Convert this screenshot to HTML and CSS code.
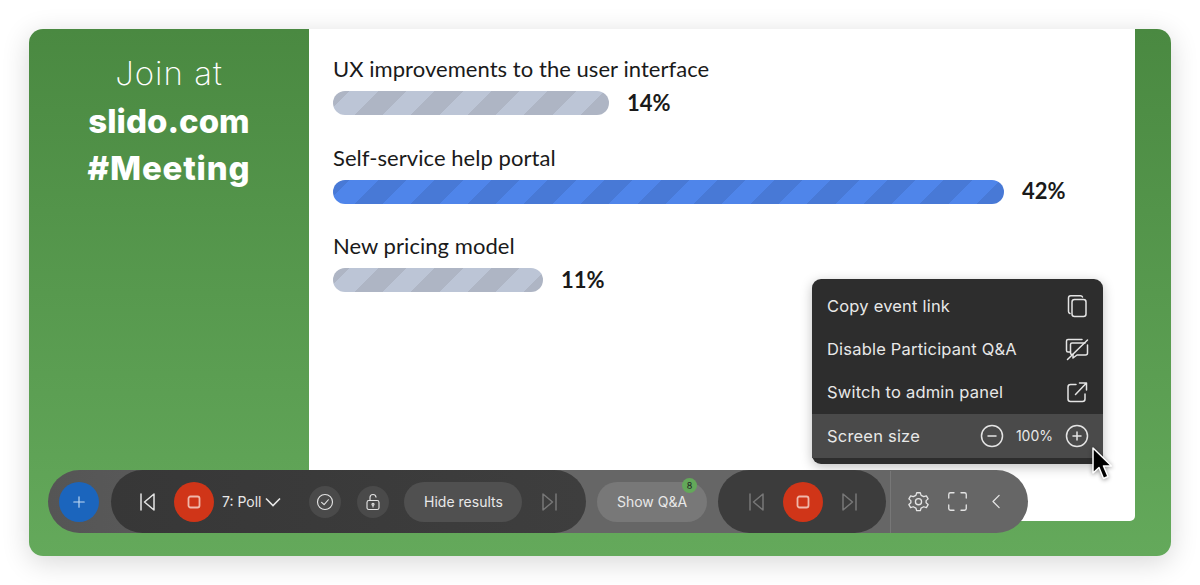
FILE: index.html
```html
<!DOCTYPE html>

<html>
    <head>
        <link rel="stylesheet" href="styles.css">
    </head>

    <body>
        <div class="card">
            <div class="join">
                <div class="join-light">Join at</div>
                <div>slido.com</div>
                <div class="join-tag">#Meeting</div>
            </div>

            <div class="slide">
                <div class="question">UX improvements to the user interface</div>
                <div class="result">
                    <div class="bar grey w14"></div>
                    <div class="percent">14%</div>
                </div>

                <div class="question">Self-service help portal</div>
                <div class="result">
                    <div class="bar blue w42"></div>
                    <div class="percent">42%</div>
                </div>

                <div class="question">New pricing model</div>
                <div class="result">
                    <div class="bar grey w11"></div>
                    <div class="percent">11%</div>
                </div>
            </div>

            <div class="menu">
                <div class="menu-row">
                    <span>Copy event link</span>
                    <svg class="icon" viewBox="0 0 24 24"><rect x="7" y="5.5" width="14" height="17" rx="2.5"/><path d="M5 19.5 Q3.5 19 3.5 17.5 V4 Q3.5 1.8 5.7 1.8 H15.5 Q17 1.8 17.5 3"/></svg>
                </div>
                <div class="menu-row">
                    <span>Disable Participant Q&amp;A</span>
                    <svg class="icon" viewBox="0 0 24 24"><path d="M5.5 15 H3 Q1.5 15 1.5 13.5 V4 Q1.5 2.5 3 2.5 H17"/><path d="M8 17.5 H7 Q5.5 17.5 5.5 16 V7.5 Q5.5 6 7 6 H20"/><path d="M22.5 8 V16 Q22.5 18 20.5 18 H12 L8 21 V18.5"/><path d="M2.5 22.5 L22.5 3"/></svg>
                </div>
                <div class="menu-row">
                    <span>Switch to admin panel</span>
                    <svg class="icon" viewBox="0 0 24 24"><path d="M11 4.5 H5.5 Q3 4.5 3 7 V19 Q3 21.5 5.5 21.5 H17.5 Q20 21.5 20 19 V14"/><path d="M10.5 14.5 L21 3.5 M14.5 3 H21.5 V10"/></svg>
                </div>
                <div class="menu-row hover">
                    <span>Screen size</span>
                    <div class="zoom">
                        <svg class="icon" viewBox="0 0 24 24"><circle cx="12" cy="12" r="10.5"/><path d="M8 12 H16"/></svg>
                        <span class="zoom-value">100%</span>
                        <svg class="icon" viewBox="0 0 24 24"><circle cx="12" cy="12" r="10.5"/><path d="M8 12 H16 M12 8 V16"/></svg>
                    </div>
                </div>
            </div>

            <div class="toolbar">
                <button class="round add">
                    <svg class="icon" viewBox="0 0 24 24"><path d="M12 5 V19 M5 12 H19"/></svg>
                </button>

                <div class="group main">
                    <svg class="icon step" viewBox="0 0 24 24"><path d="M6 4 V20 M19 4 V20 L9.5 12 Z"/></svg>
                    <button class="round stop">
                        <svg class="icon" viewBox="0 0 24 24"><rect x="6.5" y="6.5" width="11" height="11" rx="2"/></svg>
                    </button>
                    <span class="poll">7: Poll</span>
                    <svg class="chevron" viewBox="0 0 16 10"><path d="M1 1.5 L8 8.5 L15 1.5"/></svg>
                    <button class="small check">
                        <svg class="icon" viewBox="0 0 24 24"><circle cx="12" cy="12" r="10"/><path d="M7.5 12.5 L10.8 15.5 L16.5 9"/></svg>
                    </button>
                    <button class="small lock">
                        <svg class="icon" viewBox="0 0 24 24"><rect x="4" y="10" width="16" height="12" rx="2.5"/><path d="M8 10 V6 Q8 2 12 2 Q15.5 2 16 5.5"/><circle cx="12" cy="15" r="1.4"/><path d="M12 16 V18.5"/></svg>
                    </button>
                    <button class="pill hide">Hide results</button>
                    <svg class="icon step dim next" viewBox="0 0 24 24"><path d="M18 4 V20 M5 4 V20 L14.5 12 Z"/></svg>
                </div>

                <button class="pill show">
                    Show Q&amp;A
                    <span class="badge">8</span>
                </button>

                <div class="group second">
                    <svg class="icon step dim" viewBox="0 0 24 24"><path d="M6 4 V20 M19 4 V20 L9.5 12 Z"/></svg>
                    <button class="round stop">
                        <svg class="icon" viewBox="0 0 24 24"><rect x="6.5" y="6.5" width="11" height="11" rx="2"/></svg>
                    </button>
                    <svg class="icon step dim" viewBox="0 0 24 24"><path d="M18 4 V20 M5 4 V20 L14.5 12 Z"/></svg>
                </div>

                <div class="tools">
                    <svg class="icon tool" viewBox="0 0 24 24"><path d="M10 2 H14 L15 5 L18 6.5 L21 5.5 L23 9 L20.7 11 V13.5 L23 15.5 L21 19 L18 18 L15 19.5 L14 22.5 H10 L9 19.5 L6 18 L3 19 L1 15.5 L3.3 13.5 V11 L1 9 L3 5.5 L6 6.5 L9 5 Z" stroke-linejoin="round"/><circle cx="12" cy="12.2" r="3.5"/></svg>
                    <svg class="icon tool" viewBox="0 0 24 24"><path d="M2 8 V4 Q2 2 4 2 H8 M16 2 H20 Q22 2 22 4 V8 M22 16 V20 Q22 22 20 22 H16 M8 22 H4 Q2 22 2 20 V16"/></svg>
                    <svg class="icon tool" viewBox="0 0 24 24"><path d="M15 5 L8 12 L15 19"/></svg>
                </div>
            </div>

            <svg class="cursor" viewBox="0 0 22 34"><path d="M2 1 V26 L8 20.5 L12.5 31.5 L17 29.5 L12.5 19 H20.5 Z"/></svg>
        </div>
    </body>
</html>
```

FILE: styles.css
```css
*
{
    box-sizing: border-box;
}

body
{
    margin: 0;
    background: white;
    font-family: "Inter", "Liberation Sans", sans-serif;
    overflow: hidden;
}

.card
{
    position: relative;
    display: flex;
    width: 1142px;
    height: 527px;
    margin: 29px;
    border-radius: 14px;
    background: linear-gradient(#4a8941, #64a95b);
    box-shadow: 0 6px 28px rgba(0, 0, 0, 0.16);
}

.join
{
    width: 280px;
    padding-top: 21px;
    text-align: center;
    color: white;
    font-family: "Inter", "Liberation Sans", sans-serif;
    font-size: 33px;
    font-weight: 800;
    line-height: 47.5px;
}

.join-light
{
    font-weight: 200;
    letter-spacing: 1px;
}

.join-tag
{
    letter-spacing: 0.8px;
}

.slide
{
    width: 826px;
    height: 492px;
    padding: 24px 24px;
    background: white;
    border-bottom-right-radius: 5px;
    font-family: "Lato", "Liberation Sans", sans-serif;
    color: #1a1a1a;
}

.question
{
    font-size: 22px;
    line-height: 32px;
    letter-spacing: 0.05px;
}

.result
{
    display: flex;
    align-items: center;
    gap: 18px;
    height: 24px;
    margin-top: 6px;
    margin-bottom: 26.5px;
}

.bar
{
    height: 24px;
    border-radius: 12px;
}

.grey
{
    background: repeating-linear-gradient(135deg, #aeb5c4 0 12px, #bcc5d6 12px 32px, #aeb5c4 32px 40px);
}

.blue
{
    background: repeating-linear-gradient(135deg, #4879d6 0 12px, #4f85ea 12px 32px, #4879d6 32px 40px);
}

.w14
{
    width: 276px;
}

.w42
{
    width: 671px;
}

.w11
{
    width: 210px;
}

.percent
{
    margin-bottom: 2px;
    font-size: 22px;
    font-weight: 700;
}

.icon
{
    display: block;
    width: 24px;
    height: 24px;
    fill: none;
    stroke: #e4e4e4;
    stroke-width: 1.5;
    stroke-linecap: round;
    stroke-linejoin: round;
}

.menu
{
    position: absolute;
    left: 783px;
    top: 250px;
    width: 291px;
    padding: 5px 0 6px;
    border-radius: 9px;
    background: #2d2d2d;
    color: #e8e8e8;
    font-size: 16.5px;
    letter-spacing: 0.2px;
    box-shadow: 0 3px 12px rgba(0, 0, 0, 0.25);
}

.menu-row
{
    display: flex;
    justify-content: space-between;
    align-items: center;
    height: 43.4px;
    padding: 0 14px 0 15px;
}

.hover
{
    background: #4a4a4a;
}

.zoom
{
    display: flex;
    align-items: center;
    gap: 12px;
}

.zoom-value
{
    font-size: 14px;
    letter-spacing: 0;
}

.toolbar
{
    position: absolute;
    left: 19px;
    top: 441px;
    display: flex;
    align-items: center;
    width: 980px;
    height: 63px;
    padding-left: 11px;
    border-radius: 32px;
    background: linear-gradient(to right, #555555, #666666 45%);
    font-size: 14px;
    color: #e8e8e8;
}

button
{
    display: flex;
    justify-content: center;
    align-items: center;
    border: none;
    padding: 0;
    font: inherit;
    color: inherit;
}

.round
{
    flex: none;
    width: 40px;
    height: 40px;
    border-radius: 50%;
}

.add
{
    background: #1b65bd;
}

.add .icon
{
    width: 18px;
    height: 18px;
    stroke: #c4dcf5;
}

.stop
{
    background: #d03518;
}

.stop .icon
{
    stroke: #f0b8aa;
    stroke-width: 1.8;
}

.group
{
    display: flex;
    align-items: center;
    height: 63px;
    border-radius: 32px;
}

.main
{
    width: 475px;
    margin-left: 12px;
    padding-left: 24px;
    background: linear-gradient(to right, #373737, #3e3e3e);
}

.step
{
    flex: none;
    margin-right: 15px;
}

.dim
{
    stroke: #777777;
}

.poll
{
    margin-left: 8px;
    white-space: nowrap;
}

.chevron
{
    flex: none;
    width: 16px;
    height: 10px;
    margin-left: 4px;
    fill: none;
    stroke: #e8e8e8;
    stroke-width: 1.6;
}

.small
{
    flex: none;
    width: 32px;
    height: 32px;
    border-radius: 50%;
    background: #4a4a4a;
}

.small .icon
{
    width: 18px;
    height: 18px;
}

.check
{
    margin-left: 28px;
}

.lock
{
    margin-left: 16px;
}

.pill
{
    flex: none;
    height: 40px;
    border-radius: 20px;
}

.hide
{
    width: 118px;
    margin-left: 15px;
    background: #505050;
}

.next
{
    margin-left: 16px;
    margin-right: 0;
}

.show
{
    position: relative;
    width: 110px;
    margin-left: 11px;
    background: #787878;
}

.badge
{
    position: absolute;
    right: 10px;
    top: -4px;
    width: 15px;
    height: 15px;
    border-radius: 50%;
    background: #63a85a;
    color: #222222;
    font-size: 9px;
    line-height: 15px;
    text-align: center;
}

.second
{
    width: 168px;
    margin-left: 11px;
    padding-left: 26px;
    background: #3c3c3c;
}

.second .step:last-child
{
    margin-left: 15px;
    margin-right: 0;
}

.tools
{
    display: flex;
    align-items: center;
    gap: 18px;
    height: 62px;
    margin-left: 4px;
    padding-left: 17px;
    border-left: 1px solid #777777;
}

.tool
{
    width: 21px;
    height: 21px;
}

.cursor
{
    position: absolute;
    left: 1062px;
    top: 418px;
    width: 22px;
    height: 34px;
    fill: black;
    stroke: white;
    stroke-width: 1.5;
    stroke-linejoin: round;
    filter: drop-shadow(0 1px 2px rgba(0, 0, 0, 0.4));
}
```
